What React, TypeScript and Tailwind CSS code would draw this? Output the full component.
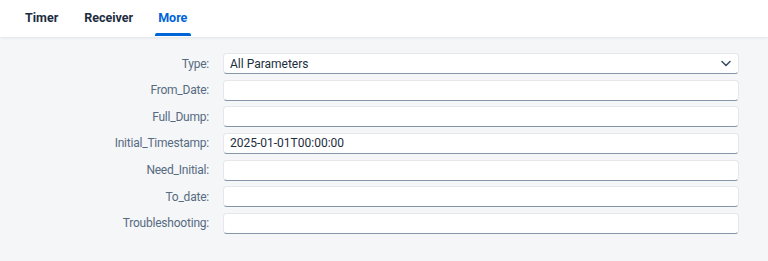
import React from "react";

const fields: { label: string; value?: string; select?: boolean }[] = [
  { label: "Type:", value: "All Parameters", select: true },
  { label: "From_Date:" },
  { label: "Full_Dump:" },
  { label: "Initial_Timestamp:", value: "2025-01-01T00:00:00" },
  { label: "Need_Initial:" },
  { label: "To_date:" },
  { label: "Troubleshooting:" },
];

export default function App() {
  return (
    <div
      className="w-[768px] h-[261px] bg-[#f5f6f7] overflow-hidden"
      style={{ fontFamily: 'Roboto, "Noto Sans", sans-serif' }}
    >
      <div className="h-[37px] bg-white shadow-[0_1px_3px_rgba(0,0,0,0.08)] flex items-stretch pl-[23px] relative z-10">
        <div className="relative flex items-center px-[2px] mr-[22px] text-[12.5px] font-bold text-[#1d2d3e]">Timer</div>
        <div className="relative flex items-center px-[2px] mr-[21px] text-[12.5px] font-bold text-[#1d2d3e]">Receiver</div>
        <div className="relative flex items-center px-[2px] text-[12.5px] font-bold text-[#0064d9]">
          More
          <span className="absolute left-[-1px] right-[-2px] bottom-[1px] h-[3px] bg-[#0064d9] rounded-t-[2px]" />
        </div>
      </div>
      <div className="pt-[16px] pr-[29px] grid grid-cols-[209px_1fr] gap-x-[14px] gap-y-[5.67px]">
        {fields.map((f) => (
          <React.Fragment key={f.label}>
            <div className="h-[21px] flex items-center justify-end text-[12px] tracking-[-0.22px] text-[#556b82] whitespace-nowrap">
              {f.label}
            </div>
            <div className="h-[21px] bg-white rounded-[4px] border border-[#e5e7ea] border-b-[#8696a9] flex items-center pl-[6px] pr-[7px] text-[12px] text-[#1d2d3e]">
              <span className="flex-1">{f.value ?? ""}</span>
              {f.select && (
                <svg width="10" height="7" viewBox="0 0 10 7" fill="none">
                  <path d="M1 1.5 L5 5.5 L9 1.5" stroke="#3d5066" strokeWidth="1.6" strokeLinecap="round" strokeLinejoin="round" />
                </svg>
              )}
            </div>
          </React.Fragment>
        ))}
      </div>
    </div>
  );
}
